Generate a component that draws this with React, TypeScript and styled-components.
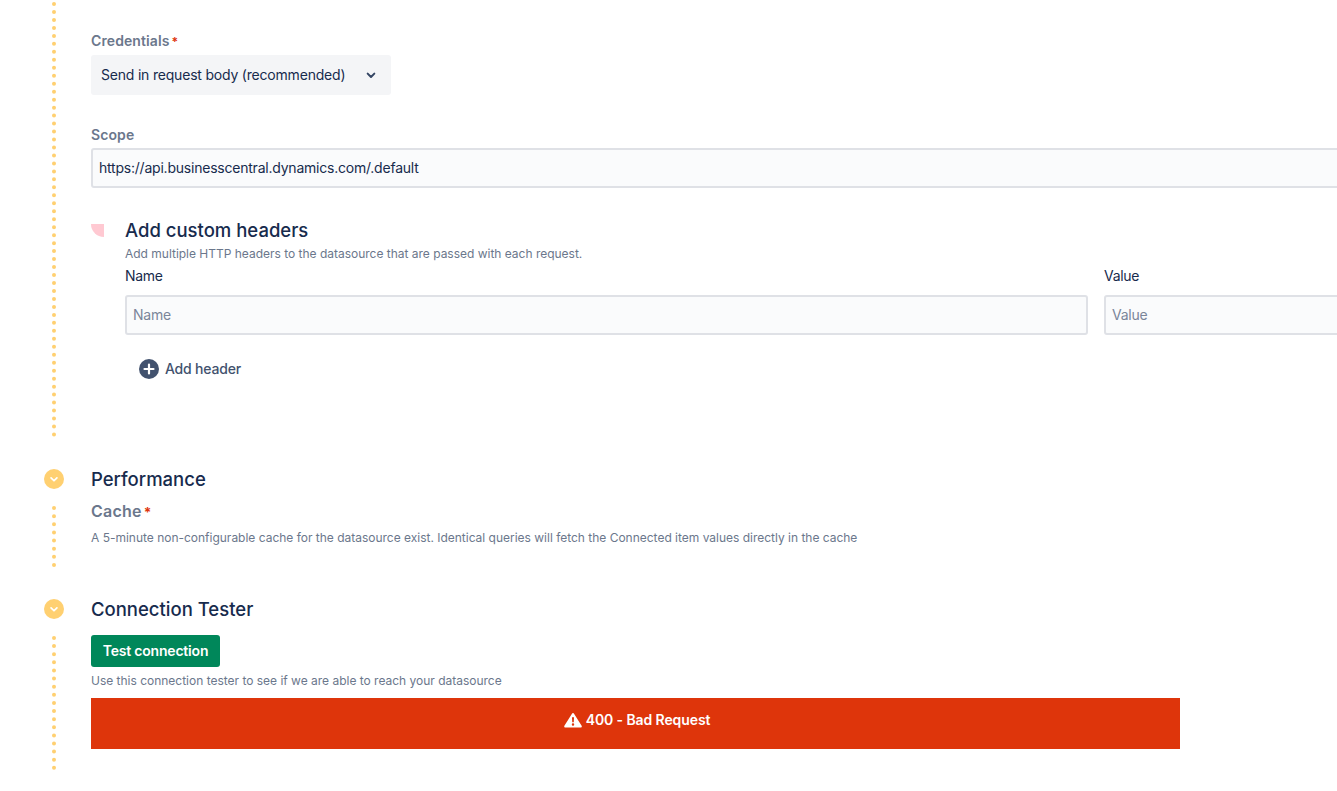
import React from "react";
import styled, { createGlobalStyle } from "styled-components";

const Global = createGlobalStyle`
  html, body { margin: 0; padding: 0; background: #fff; }
  body { font-family: Inter, "Liberation Sans", sans-serif; color: #172B4D; -webkit-font-smoothing: antialiased; }
`;

const Page = styled.div`
  width: 1337px;
  height: 791px;
  overflow: hidden;
`;

const Section = styled.section`
  display: flex;
`;

const Rail = styled.div`
  width: 91px;
  flex: none;
  display: flex;
`;

const DottedLine = styled.div<{ $top: number }>`
  margin: ${(p) => p.$top}px 0 0 52px;
  border-left: 4px dotted #ffd071;
`;

const Body = styled.div<{ $top: number; $bottom: number }>`
  flex: 1;
  min-width: 0;
  padding: ${(p) => p.$top}px 0 ${(p) => p.$bottom}px;
`;

const SectionHeader = styled.header`
  display: flex;
  align-items: center;
  margin-top: 28px;
  height: 28px;
  padding-left: 44px;
  gap: 27px;
`;

const Badge = styled.span`
  width: 20px;
  height: 20px;
  border-radius: 50%;
  background: #ffd071;
  display: flex;
  align-items: center;
  justify-content: center;
`;

const SectionTitle = styled.h2`
  margin: 0;
  font-size: 18.5px;
  line-height: 28px;
  font-weight: 500;
  color: #172b4d;
`;

const FieldLabel = styled.label<{ $top?: number }>`
  display: block;
  margin-top: ${(p) => p.$top ?? 0}px;
  font-size: 14px;
  line-height: 20px;
  font-weight: 600;
  letter-spacing: 0.1px;
  color: #6b778c;
`;

const Star = styled.span`
  color: #de350b;
  margin-left: 2px;
  font-size: 0.85em;
  font-weight: 700;
  line-height: 0;
`;

const SelectBox = styled.div`
  margin-top: 4px;
  width: 300px;
  height: 40px;
  box-sizing: border-box;
  padding: 0 12px 0 10px;
  background: #f4f5f7;
  border-radius: 3px;
  display: flex;
  align-items: center;
  justify-content: space-between;
  font-size: 14px;
  letter-spacing: -0.2px;
  color: #172b4d;
`;

const SelectText = styled.span`
  margin-top: -2px;
`;

const Input = styled.div<{ $width: number; $placeholder?: boolean }>`
  width: ${(p) => p.$width}px;
  height: 40px;
  box-sizing: border-box;
  flex: none;
  padding: 0 6px 1px;
  display: flex;
  align-items: center;
  background: #fafbfc;
  border: 2px solid #dfe1e6;
  border-radius: 3px;
  font-size: 14px;
  letter-spacing: -0.22px;
  color: ${(p) => (p.$placeholder ? "#7a869a" : "#172b4d")};
`;

const ScopeRow = styled.div`
  margin-top: 3px;
`;

const HeadersBlock = styled.div`
  margin-top: 30px;
  display: flex;
  gap: 21px;
`;

const Marker = styled.span`
  width: 13px;
  height: 13px;
  flex: none;
  margin-top: 6px;
  background: #ffc9d2;
  border-bottom-left-radius: 13px;
`;

const HeadersContent = styled.div`
  flex: 1;
  min-width: 0;
`;

const HeadersTitle = styled.h3`
  margin: 0;
  font-size: 18.5px;
  line-height: 24px;
  font-weight: 500;
  color: #172b4d;
`;

const Hint = styled.p<{ $top?: number }>`
  margin: ${(p) => p.$top ?? 0}px 0 0;
  font-size: 12px;
  line-height: 16px;
  letter-spacing: -0.01px;
  color: #6b778c;
`;

const HeaderGrid = styled.div`
  margin-top: 4px;
  display: grid;
  grid-template-columns: 963px 300px;
  column-gap: 16px;
  row-gap: 9px;
`;

const ColumnLabel = styled.span`
  font-size: 14px;
  line-height: 20px;
  letter-spacing: -0.3px;
  color: #172b4d;
`;

const AddHeader = styled.div`
  margin: 24px 0 0 14px;
  display: flex;
  align-items: center;
  gap: 6px;
  height: 20px;
  font-size: 14px;
  font-weight: 500;
  letter-spacing: -0.2px;
  color: #42526e;
`;

const AddHeaderText = styled.span`
  margin-top: -2px;
`;

const CacheLabel = styled.div`
  font-size: 16px;
  line-height: 24px;
  font-weight: 600;
  letter-spacing: 0.25px;
  color: #6b778c;
`;

const TestButton = styled.button`
  display: block;
  width: 129px;
  height: 32px;
  padding: 0 0 2px;
  border: 0;
  border-radius: 3px;
  background: #00875a;
  color: #fff;
  font-family: inherit;
  font-size: 14px;
  font-weight: 600;
  letter-spacing: -0.2px;
`;

const Alert = styled.div`
  margin-top: 9px;
  width: 1089px;
  height: 51px;
  box-sizing: border-box;
  padding: 0 0 8px 3px;
  background: #de350b;
  color: #fff;
  display: flex;
  align-items: center;
  justify-content: center;
  gap: 4px;
  font-size: 14px;
  font-weight: 600;
  letter-spacing: -0.1px;
`;

const Chevron = ({ color, size, weight }: { color: string; size: number; weight: number }) => (
  <svg width={size} height={size} viewBox="0 0 24 24" fill="none" aria-hidden>
    <path d="M7 10l5 5 5-5" stroke={color} strokeWidth={weight} strokeLinecap="round" strokeLinejoin="round" />
  </svg>
);

const PlusCircle = () => (
  <svg width="20" height="20" viewBox="0 0 20 20" aria-hidden>
    <circle cx="10" cy="10" r="10" fill="#42526e" />
    <path d="M10 5.5v9M5.5 10h9" stroke="#fff" strokeWidth="2.2" strokeLinecap="round" />
  </svg>
);

const Warning = () => (
  <svg width="18" height="16" viewBox="0 0 19 16" aria-hidden>
    <path d="M9.5 0.6c.5 0 .9.3 1.1.7l8 12.9c.5.8-.1 1.8-1 1.8H1.4c-.9 0-1.5-1-1-1.8l8-12.9c.2-.4.6-.7 1.1-.7z" fill="#fff" />
    <path d="M8.4 5h2.2l-.3 5.4H8.7zM9.5 11.4a1.3 1.3 0 1 1 0 2.6 1.3 1.3 0 0 1 0-2.6z" fill="#de350b" />
  </svg>
);

export default function App() {
  return (
    <Page>
      <Global />
      <Section>
        <Rail>
          <DottedLine $top={2} />
        </Rail>
        <Body $top={31} $bottom={58}>
          <FieldLabel>
            Credentials<Star>*</Star>
          </FieldLabel>
          <SelectBox>
            <SelectText>Send in request body (recommended)</SelectText>
            <Chevron color="#344563" size={16} weight={3} />
          </SelectBox>
          <FieldLabel $top={30}>Scope</FieldLabel>
          <ScopeRow>
            <Input $width={1300}>https://api.businesscentral.dynamics.com/.default</Input>
          </ScopeRow>
          <HeadersBlock>
            <Marker />
            <HeadersContent>
              <HeadersTitle>Add custom headers</HeadersTitle>
              <Hint $top={4}>Add multiple HTTP headers to the datasource that are passed with each request.</Hint>
              <HeaderGrid>
                <ColumnLabel>Name</ColumnLabel>
                <ColumnLabel>Value</ColumnLabel>
                <Input $width={963} $placeholder>Name</Input>
                <Input $width={300} $placeholder>Value</Input>
              </HeaderGrid>
              <AddHeader>
                <PlusCircle />
                <AddHeaderText>Add header</AddHeaderText>
              </AddHeader>
            </HeadersContent>
          </HeadersBlock>
        </Body>
      </Section>

      <SectionHeader>
        <Badge><Chevron color="#fff" size={14} weight={3} /></Badge>
        <SectionTitle>Performance</SectionTitle>
      </SectionHeader>
      <Section>
        <Rail>
          <DottedLine $top={13} />
        </Rail>
        <Body $top={6} $bottom={21}>
          <CacheLabel>
            Cache<Star>*</Star>
          </CacheLabel>
          <Hint $top={7}>A 5-minute non-configurable cache for the datasource exist. Identical queries will fetch the Connected item values directly in the cache</Hint>
        </Body>
      </Section>

      <SectionHeader>
        <Badge><Chevron color="#fff" size={14} weight={3} /></Badge>
        <SectionTitle>Connection Tester</SectionTitle>
      </SectionHeader>
      <Section>
        <Rail>
          <DottedLine $top={13} />
        </Rail>
        <Body $top={12} $bottom={21}>
          <TestButton>Test connection</TestButton>
          <Hint $top={6}>Use this connection tester to see if we are able to reach your datasource</Hint>
          <Alert>
            <Warning />
            400 - Bad Request
          </Alert>
        </Body>
      </Section>
    </Page>
  );
}
